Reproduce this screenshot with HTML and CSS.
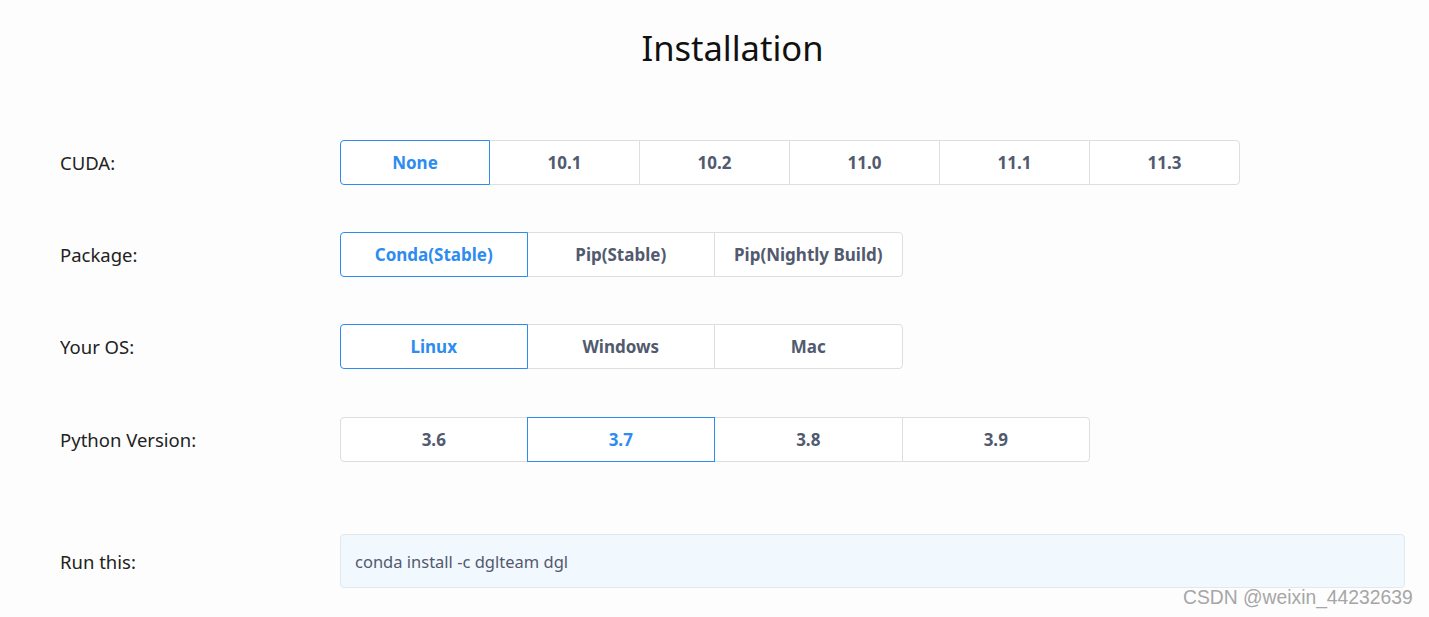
FILE: index.html
```html
<!DOCTYPE html>
<html lang="en">

<head>
  <meta charset="UTF-8">
  <meta name="viewport" content="width=device-width, initial-scale=1.0">
  <title>Installation</title>
  <link rel="stylesheet" href="styles.css">
</head>

<body>
  <div class="install">
    <h1 class="install-title">Installation</h1>

    <div class="option-row">
      <div class="option-label">CUDA:</div>
      <div class="btn-group cuda">
        <button class="opt active">None</button>
        <button class="opt">10.1</button>
        <button class="opt">10.2</button>
        <button class="opt">11.0</button>
        <button class="opt">11.1</button>
        <button class="opt">11.3</button>
      </div>
    </div>

    <div class="option-row">
      <div class="option-label">Package:</div>
      <div class="btn-group wide">
        <button class="opt active">Conda(Stable)</button>
        <button class="opt">Pip(Stable)</button>
        <button class="opt">Pip(Nightly Build)</button>
      </div>
    </div>

    <div class="option-row">
      <div class="option-label">Your OS:</div>
      <div class="btn-group wide">
        <button class="opt active">Linux</button>
        <button class="opt">Windows</button>
        <button class="opt">Mac</button>
      </div>
    </div>

    <div class="option-row">
      <div class="option-label">Python Version:</div>
      <div class="btn-group wide">
        <button class="opt">3.6</button>
        <button class="opt active">3.7</button>
        <button class="opt">3.8</button>
        <button class="opt">3.9</button>
      </div>
    </div>

    <div class="option-row run-row">
      <div class="option-label">Run this:</div>
      <div class="command">conda install -c dglteam dgl</div>
    </div>
  </div>

  <div class="watermark">CSDN @weixin_44232639</div>
</body>

</html>
```

FILE: styles.css
```css
body {
  font-family: 'Noto Sans', 'Open Sans', sans-serif;
  margin: 0;
  background-color: #fdfdfd;
  color: #1f2328;
}

.install {
  padding: 0 24px 0 60px;
}

.install-title {
  margin: 0;
  padding-top: 22px;
  height: 140px;
  box-sizing: border-box;
  text-align: center;
  font-size: 34.5px;
  font-weight: 400;
  line-height: 52px;
  color: #111;
}

.option-row {
  display: flex;
  align-items: center;
  height: 45px;
  margin-bottom: 47.2px;
}

.option-label {
  width: 280px;
  flex-shrink: 0;
  font-size: 18.5px;
  color: #222;
}

.btn-group {
  display: flex;
}

.opt {
  height: 45px;
  padding: 0;
  margin: 0;
  margin-left: -1px;
  border: 1px solid #dcdee2;
  background-color: #fff;
  font-family: 'Noto Sans', 'Open Sans', sans-serif;
  font-size: 17px;
  font-weight: 700;
  color: #515a6e;
  cursor: pointer;
  position: relative;
}

.opt:first-child {
  margin-left: 0;
  border-radius: 4px 0 0 4px;
}

.opt:last-child {
  border-radius: 0 4px 4px 0;
}

.opt.active {
  border-color: #2d8cf0;
  color: #2d8cf0;
  z-index: 1;
}

.cuda .opt {
  width: 151px;
}

.cuda .opt:first-child {
  width: 150px;
}

.wide .opt {
  width: 188.5px;
}

.wide .opt:first-child {
  width: 187.5px;
}

.run-row {
  margin-top: 72.8px;
  height: 54px;
  margin-bottom: 0;
}

.command {
  flex: 1;
  height: 54px;
  box-sizing: border-box;
  padding: 0 14px;
  display: flex;
  align-items: center;
  background-color: #f1f8fe;
  border: 1px solid #e3e8ee;
  border-radius: 4px;
  font-size: 16.5px;
  color: #515a6e;
}

.watermark {
  position: absolute;
  left: 1183px;
  top: 587px;
  font-family: 'Liberation Sans', Arial, sans-serif;
  font-size: 19.3px;
  color: #a6a6a6;
  white-space: nowrap;
}
```
